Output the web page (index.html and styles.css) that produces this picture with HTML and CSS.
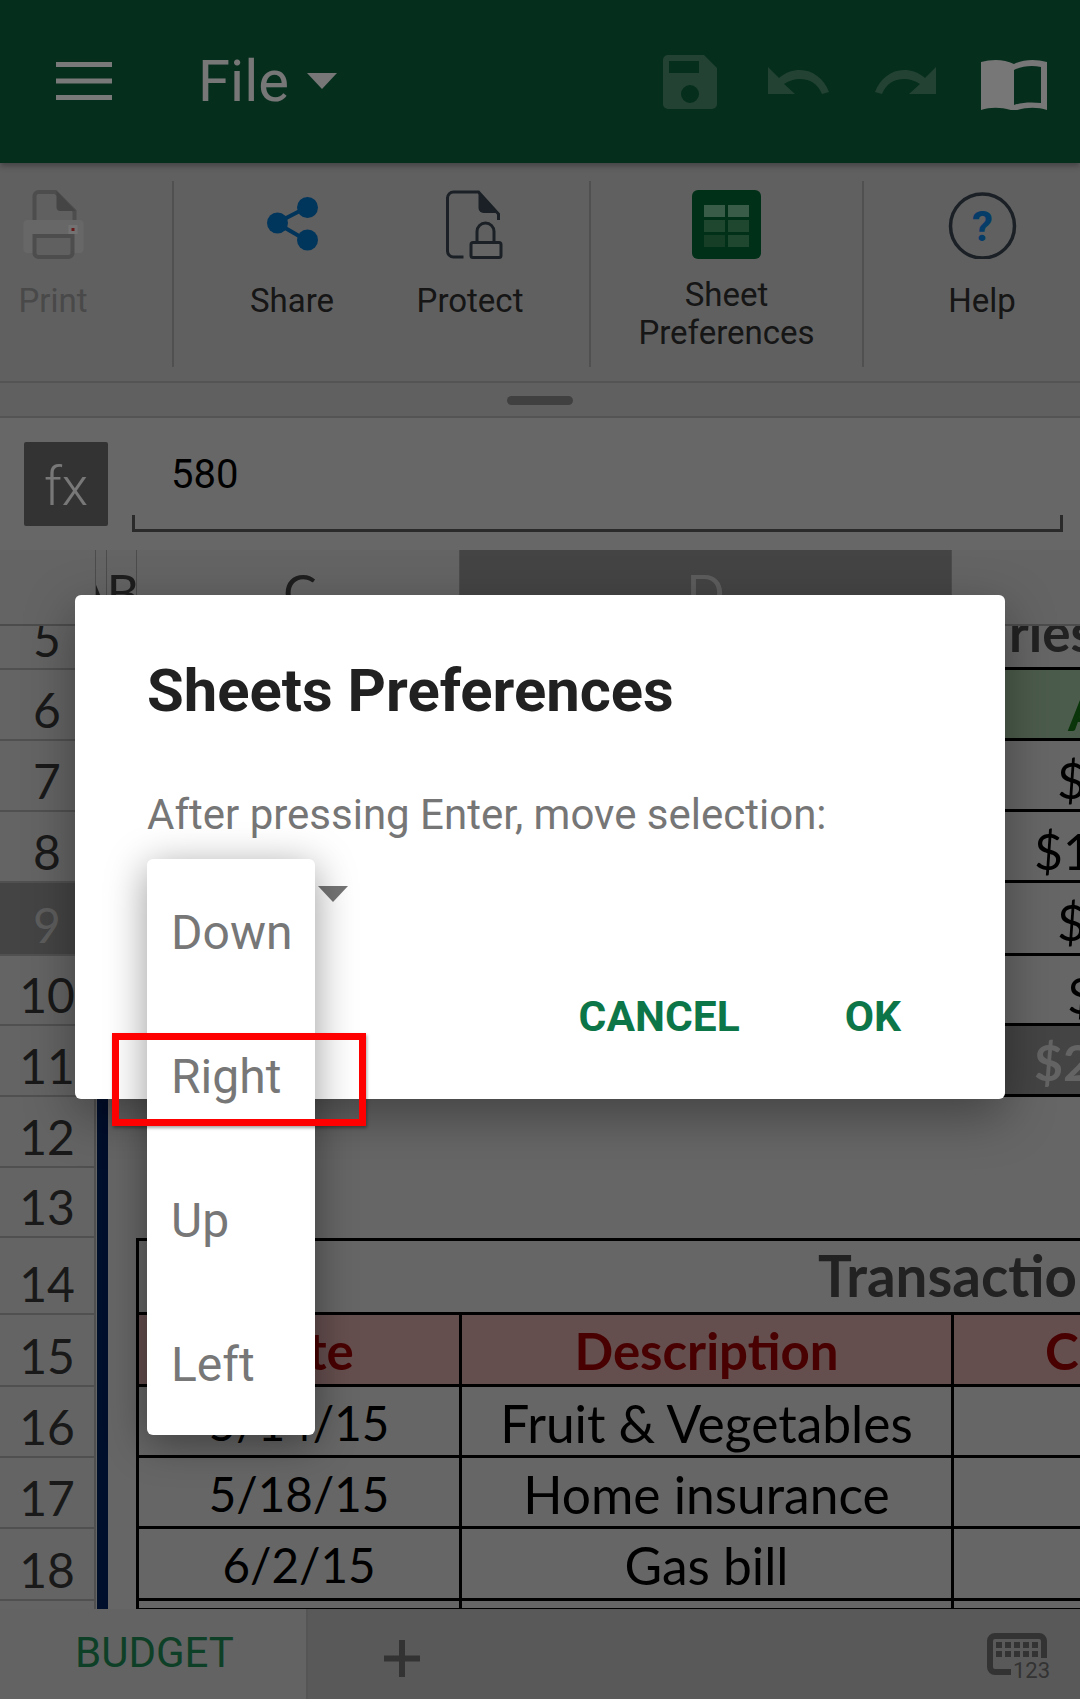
FILE: index.html
```html
<!DOCTYPE html>
<html lang="en">
<head>
<meta charset="utf-8">
<title>Sheets Preferences</title>
<link rel="stylesheet" href="styles.css">
</head>
<body>
<div class="app">
  <header class="appbar">
    <svg class="i-menu" viewBox="0 0 56 38"><path d="M0 0h56v5H0zM0 16.500h56v5H0zM0 33h56v5H0z"/></svg>
    <span class="file">File</span>
    <span class="file-caret"></span>
    <span class="appbar-space"></span>
    <svg class="i-save" viewBox="0 0 54 54"><path fill-rule="evenodd" d="M5 0h36l13 13v36a5 5 0 0 1-5 5H5a5 5 0 0 1-5-5V5a5 5 0 0 1 5-5zM6 6v12h30V6zM27 30a9 9 0 1 0 0 18 9 9 0 0 0 0-18z"/></svg>
    <svg class="i-undo" viewBox="0 0 61 27"><path d="M0 0l11 11C18 5 25 3 32 3c13 0 24 9 29 22l-7 2C50 17 42 12 32 12c-6 0-12 2-16 5l11 10H0z"/></svg>
    <svg class="i-redo" viewBox="0 0 61 27"><path d="M61 0L50 11C43 5 36 3 29 3 16 3 5 12 0 25l7 2c4-10 12-15 22-15 6 0 12 2 16 5L34 27h27z"/></svg>
    <svg class="i-book" viewBox="0 0 66 51"><path fill-rule="evenodd" d="M0 3c11-3 23-3 33 2 10-5 22-5 33-2v48c-10-3-21-3-33 1-12-4-23-4-33-1zM33 11v35c9-3 18-3 27-2V8c-9-2-19-1-27 3z"/></svg>
  </header>

  <section class="ribbon">
    <div class="rgroup rgroup-print">
      <div class="ritem ritem-off">
        <svg class="ricon" viewBox="0 0 60 69">
          <path class="p-line" d="M11 30V6a4 4 0 0 1 4-4h17l19 19v9" />
          <path class="p-fold" d="M33 1l19 20H37a4 4 0 0 1-4-4z"/>
          <path class="p-body" d="M4 30h52a4 4 0 0 1 4 4v25a4 4 0 0 1-4 4H4a4 4 0 0 1-4-4V34a4 4 0 0 1 4-4z"/>
          <path class="p-led" d="M45 35h9v9h-9z"/>
          <path class="p-dot" d="M48 38h3v3h-3z"/>
          <path class="p-tray" d="M11 46h38v17a4 4 0 0 1-4 4H15a4 4 0 0 1-4-4z"/>
        </svg>
        <span class="rlabel">Print</span>
      </div>
    </div>
    <div class="rgroup rgroup-doc">
      <div class="ritem">
        <svg class="ricon" viewBox="0 0 60 69">
          <path class="s-line" d="M14 33L47 16M14 33l33 19"/>
          <circle class="s-dot" cx="15" cy="33" r="10.500"/>
          <circle class="s-dot" cx="45" cy="17.500" r="10.500"/>
          <circle class="s-dot" cx="45" cy="50" r="10.500"/>
        </svg>
        <span class="rlabel">Share</span>
      </div>
      <div class="ritem">
        <svg class="ricon" viewBox="0 0 60 69">
          <path class="l-line" d="M23 67H13a6 6 0 0 1-6-6V8a6 6 0 0 1 6-6h25l20 22v6"/>
          <path class="l-fold" d="M38 1.500L58 23H43a5 5 0 0 1-5-5z"/>
          <path class="l-line" d="M36.500 52V41.500a8.500 8.500 0 0 1 17 0V52"/>
          <rect class="l-box" x="30.500" y="52.500" width="30" height="15" rx="2"/>
        </svg>
        <span class="rlabel">Protect</span>
      </div>
    </div>
    <div class="rgroup rgroup-sheet">
      <div class="ritem ritem-wide ritem-two">
        <svg class="ricon" viewBox="0 0 69 69">
          <rect class="g-bg" width="69" height="69" rx="6"/>
          <path class="g-a" d="M12 15h21v12H12zM36 15h21v12H36z"/>
          <path class="g-b" d="M12 30h21v12H12zM36 30h21v12H36z"/>
          <path class="g-c" d="M12 45h21v12H12z"/>
          <path class="g-b" d="M36 45h21v12H36z"/>
        </svg>
        <span class="rlabel">Sheet Preferences</span>
      </div>
    </div>
    <div class="rgroup rgroup-help">
      <div class="ritem">
        <svg class="ricon" viewBox="0 0 66 69">
          <circle class="h-ring" cx="33" cy="36" r="32"/>
          <text class="h-q" x="33" y="51">?</text>
        </svg>
        <span class="rlabel">Help</span>
      </div>
    </div>
  </section>
  <div class="handle-strip"><span class="handle"></span></div>

  <section class="formula">
    <div class="fx">fx</div>
    <div class="formula-field"><span class="formula-value">580</span></div>
  </section>

  <section class="sheet">
    <div class="colhead">
      <div class="ch ch-corner"></div>
      <div class="ch ch-b"><span>AB</span></div>
      <div class="ch ch-c">C</div>
      <div class="ch ch-d">D</div>
      <div class="ch ch-e"></div>
    </div>

    <div class="row h44"><div class="rn">5</div><div class="bar"></div><div class="gap"></div><div class="c-c"></div><div class="c-d"></div><div class="c-e e-line e-title"><span>ries</span></div></div>
    <div class="row"><div class="rn">6</div><div class="bar"></div><div class="gap"></div><div class="c-c"></div><div class="c-d"></div><div class="c-e e-line e-green"><span>A</span></div></div>
    <div class="row"><div class="rn">7</div><div class="bar"></div><div class="gap"></div><div class="c-c"></div><div class="c-d"></div><div class="c-e e-line e-far">$</div></div>
    <div class="row"><div class="rn">8</div><div class="bar"></div><div class="gap"></div><div class="c-c"></div><div class="c-d"></div><div class="c-e e-line e-near">$1</div></div>
    <div class="row h73"><div class="rn rn-on">9</div><div class="bar"></div><div class="gap"></div><div class="c-c"></div><div class="c-d"></div><div class="c-e e-line e-far">$</div></div>
    <div class="row h70"><div class="rn">10</div><div class="bar"></div><div class="gap"></div><div class="c-c"></div><div class="c-d"></div><div class="c-e e-line e-farther">$</div></div>
    <div class="row"><div class="rn">11</div><div class="bar"></div><div class="gap"></div><div class="c-c"></div><div class="c-d"></div><div class="c-e e-line e-total">$2</div></div>
    <div class="row"><div class="rn">12</div><div class="bar"></div><div class="gap"></div></div>
    <div class="row h70"><div class="rn">13</div><div class="bar"></div><div class="gap"></div></div>
    <div class="row h77"><div class="rn">14</div><div class="bar"></div><div class="gap"></div><div class="t-title"><span>Transactio</span></div></div>
    <div class="row h72"><div class="rn">15</div><div class="bar"></div><div class="gap"></div><div class="t t-c t-head">Date</div><div class="t t-d t-head">Description</div><div class="t t-e t-head t-ca">Ca</div></div>
    <div class="row"><div class="rn">16</div><div class="bar"></div><div class="gap"></div><div class="t t-c">5/14/15</div><div class="t t-d t-text">Fruit &amp; Vegetables</div><div class="t t-e"></div></div>
    <div class="row"><div class="rn">17</div><div class="bar"></div><div class="gap"></div><div class="t t-c">5/18/15</div><div class="t t-d t-text">Home insurance</div><div class="t t-e"></div></div>
    <div class="row h72"><div class="rn">18</div><div class="bar"></div><div class="gap"></div><div class="t t-c">6/2/15</div><div class="t t-d t-text">Gas bill</div><div class="t t-e"></div></div>
    <div class="row h10"><div class="rn"></div><div class="bar"></div><div class="gap"></div><div class="t t-c"></div><div class="t t-d"></div><div class="t t-e"></div></div>
  </section>

  <footer class="tabs">
    <div class="tab">BUDGET</div>
    <svg class="i-plus" viewBox="0 0 36 37"><path d="M15 0h6v15.500h15v6H21V37h-6V21.500H0v-6h15z"/></svg>
    <span class="appbar-space"></span>
    <svg class="i-kbd" viewBox="0 0 63 45">
      <path class="k-line" d="M24 39H8a5 5 0 0 1-5-5V8a5 5 0 0 1 5-5h44a5 5 0 0 1 5 5v17"/>
      <path class="k-keys" d="M9 9h6v6H9zM18 9h6v6h-6zM27 9h6v6h-6zM36 9h6v6h-6zM45 9h6v6h-6zM9 18h6v6H9zM18 18h6v6h-6zM27 18h6v6h-6zM36 18h6v6h-6zM45 18h6v6h-6z"/>
      <text class="k-num" x="26" y="45">123</text>
    </svg>
  </footer>
</div>

<div class="scrim"></div>

<div class="dialog">
  <h1 class="dialog-title">Sheets Preferences</h1>
  <p class="dialog-text">After pressing Enter, move selection:</p>
  <span class="select-caret"></span>
  <div class="dialog-actions">
    <span class="action action-cancel">CANCEL</span>
    <span class="action">OK</span>
  </div>
</div>

<ul class="menu">
  <li>Down</li>
  <li>Right</li>
  <li>Up</li>
  <li>Left</li>
</ul>

<div class="callout"></div>
</body>
</html>
```

FILE: styles.css
```css
* { box-sizing: border-box; }
html, body { margin: 0; padding: 0; }
body {
  width: 1080px;
  height: 1699px;
  overflow: hidden;
  position: relative;
  font-family: Roboto, sans-serif;
  background: #ccc;
}
.app { display: flex; flex-direction: column; height: 1699px; }

/* app bar */
.appbar {
  height: 163px;
  background: #0a5c3a;
  display: flex;
  align-items: flex-start;
  flex: none;
  box-shadow: 0 3px 6px rgba(0,0,0,.3);
  position: relative;
  padding-left: 56px;
}
.i-menu { width: 56px; height: 38px; margin-top: 62px; fill: #f2f2f2; flex: none; }
.file {
  margin-left: 86px;
  font-size: 58px;
  font-weight: 400;
  line-height: 68px;
  margin-top: 47px;
  color: #eee;
}
.file-caret {
  margin: 73px 0 0 18px;
  border-left: 15px solid transparent;
  border-right: 15px solid transparent;
  border-top: 16px solid #eee;
}
.appbar-space { flex: 1; }
.i-save { width: 54px; height: 54px; margin-top: 55px; fill: #468468; flex: none; }
.i-undo { width: 61px; height: 27px; margin: 67px 0 0 51px; fill: #468468; flex: none; }
.i-redo { width: 61px; height: 27px; margin: 67px 0 0 46px; fill: #468468; flex: none; }
.i-book { width: 66px; height: 51px; margin: 59px 33px 0 45px; fill: #eee; flex: none; }

/* ribbon */
.ribbon {
  height: 220px;
  flex: none;
  background: #c0c0c0;
  display: flex;
  border-bottom: 2px solid #a8a8a8;
  padding-top: 18px;
  overflow: hidden;
}
.rgroup { height: 186px; display: flex; flex: none; padding-top: 9px; border-right: 2px solid #a0a0a0; }
.rgroup-print { width: 174px; }
.rgroup-doc { width: 417px; padding-left: 58px; gap: 58px; }
.rgroup-sheet { width: 273px; justify-content: center; }
.rgroup-help { width: 216px; padding-left: 58px; border-right: 0; }
.ritem { width: 120px; display: flex; flex-direction: column; align-items: center; }
.ritem-off { width: 106px; }
.ritem-wide { width: 190px; }
.ricon { height: 69px; width: 69px; flex: none; }
.rlabel {
  font-size: 33px;
  line-height: 38px;
  color: #2c2c2c;
  margin-top: 23px;
  text-align: center;
}
.ritem-two .rlabel { margin-top: 17px; }
.ritem-off .rlabel { color: #929292; }

.p-line { fill: none; stroke: #9a9a9a; stroke-width: 4; }
.p-fold { fill: #8a8a8a; }
.p-body { fill: #cfcfcf; }
.p-led { fill: #e4e4e4; }
.p-dot { fill: #d03030; }
.p-tray { fill: #c0c0c0; stroke: #9a9a9a; stroke-width: 4; }
.s-line { stroke: #0068b4; stroke-width: 4; fill: none; }
.s-dot { fill: #006ab8; }
.l-line { fill: none; stroke: #34404a; stroke-width: 3; }
.l-fold { fill: #34404a; }
.l-box { fill: #cacaca; stroke: #34404a; stroke-width: 3; }
.g-bg { fill: #006030; }
.g-a { fill: #70b890; }
.g-b { fill: #3f8f60; }
.g-c { fill: #2c7a4c; }
.h-ring { fill: none; stroke: #34404a; stroke-width: 3.500; }
.h-q { font: 700 42px Roboto, sans-serif; fill: #0a78d0; text-anchor: middle; }

.handle-strip {
  height: 35px;
  flex: none;
  background: #c0c0c0;
  border-bottom: 2px solid #a8a8a8;
  display: flex;
  justify-content: center;
  padding-top: 13px;
}
.handle { width: 66px; height: 9px; border-radius: 5px; background: #808080; }

/* formula bar */
.formula {
  height: 132px;
  flex: none;
  background: #cecece;
  padding: 24px 17px 0 24px;
  display: flex;
  gap: 24px;
}
.fx {
  width: 84px;
  height: 84px;
  background: #666;
  border-radius: 2px;
  color: #f0f0f0;
  font-size: 54px;
  font-weight: 300;
  line-height: 90px;
  text-align: center;
}
.formula-field {
  flex: 1;
  height: 90px;
  position: relative;
  padding-left: 39px;
}
.formula-field::after {
  content: "";
  position: absolute;
  left: 0; right: 0; bottom: 0;
  height: 14px;
  border: 3px solid #555;
  border-top: 0;
}
.formula-value { font-size: 40px; line-height: 46px; color: #000; display: block; margin-top: 10px; }

/* sheet */
.sheet { flex: 1; min-height: 0; overflow: hidden; background: #ccc; font-family: Lato, sans-serif; }
.colhead { display: flex; height: 76px; border-bottom: 2px solid #999; background: #c8c8c8; }
.ch { color: #3c3c3c; font-size: 50px; line-height: 84px; text-align: center; height: 74px; overflow: hidden; flex: none; border-right: 1px solid #999; }
.ch-corner { width: 96px; border-right: 1px solid #999; }
.ch-b {
  width: 41px;
  display: flex;
  justify-content: flex-end;
  background: linear-gradient(#999, #999) no-repeat 10px 0 / 1px 100%;
}
.ch-b span { flex: none; margin-right: -3px; }
.ch-c { width: 323px; padding-left: 4px; }
.ch-d { width: 492px; background: #888; color: #bbb; }
.ch-e { flex: 1; border-right: 0; }

.row { display: flex; height: 71px; flex: none; color: #000; overflow: hidden; }
.h44 { height: 44px; }
.h73 { height: 73px; }
.h70 { height: 70px; }
.h72 { height: 72px; }
.h77 { height: 77px; }
.h10 { height: 10px; }
.rn {
  width: 96px;
  flex: none;
  background: #c8c8c8;
  border-bottom: 2px solid #a0a0a0;
  border-right: 2px solid #a0a0a0;
  color: #333;
  font-size: 48px;
  line-height: 45px;
  text-align: center;
  display: flex;
  align-items: flex-end;
  justify-content: center;
  padding-bottom: 7px;
}
.rn-on { background: #888; color: #bbb; }
.bar { width: 11px; flex: none; margin-left: 1px; background: #001f58; }
.gap { width: 28px; flex: none; }
.c-c { width: 324px; flex: none; }
.c-d { width: 492px; flex: none; }

.c-e { flex: 1; font-size: 50px; line-height: 78px; white-space: nowrap; overflow: hidden; }
.e-line { border-bottom: 3px solid #000; }
.e-title { font-size: 53px; font-weight: 700; color: #444; line-height: 46px; padding: 0 0 0 57px; }
.e-title span { display: block; margin-top: -17px; }
.e-green { background: #98b898; padding-left: 116px; color: #146a14; font-weight: 700; line-height: 84px; }
.e-far { padding-left: 105px; }
.e-near { padding-left: 82px; }
.e-farther { padding-left: 115px; }
.e-total { background: #888; color: #c8c8c8; font-weight: 700; padding-left: 82px; line-height: 72px; }

.t {
  flex: none;
  border-left: 3px solid #000;
  border-bottom: 3px solid #000;
  font-size: 47.500px;
  line-height: 72px;
  text-align: center;
  white-space: nowrap;
  overflow: hidden;
}
.t-c { width: 323px; }
.t-d { width: 492px; }
.t-text { font-size: 51.500px; }
.t-e { flex: 1; min-width: 0; text-align: left; }
.t-ca { padding-left: 91px; }
.t-head { background: #ca9c9c; color: #900000; font-weight: 700; font-size: 51px; }
.t-title {
  flex: 1;
  border: 3px solid #000;
  border-right: 0;
  overflow: hidden;
  white-space: nowrap;
  font-size: 56.500px;
  font-weight: 700;
  color: #444;
  line-height: 68px;
  padding-left: 679px;
}

/* tabs */
.tabs { height: 90px; flex: none; background: #b2b2b2; display: flex; align-items: flex-start; position: relative; }
.tab {
  width: 308px;
  height: 90px;
  background: #c6c6c6;
  border-right: 2px solid #aaa;
  color: #1c804f;
  font-size: 42px;
  line-height: 88px;
  padding-left: 75px;
}
.i-plus { width: 36px; height: 37px; margin: 31px 0 0 76px; fill: #666; flex: none; }
.i-kbd { width: 63px; height: 45px; margin: 24px 30px 0 0; flex: none; }
.k-line { fill: none; stroke: #666; stroke-width: 6; }
.k-keys { fill: #666; }
.k-num { font: 400 22px Roboto, sans-serif; fill: #666; }

/* modal */
.scrim { position: absolute; inset: 0; background: rgba(0,0,0,.5); }
.dialog {
  position: absolute;
  left: 75px;
  top: 595px;
  width: 930px;
  height: 504px;
  background: #fff;
  border-radius: 6px;
  box-shadow: 0 16px 50px rgba(0,0,0,.35);
  padding: 54px 73px 0;
}
.dialog-title {
  margin: 0;
  font-size: 59.750px;
  font-weight: 700;
  line-height: 84px;
  color: #212121;
  margin-left: -1px;
}
.dialog-text {
  margin: 57px 0 0;
  margin-left: -1px;
  font-size: 42px;
  line-height: 50px;
  color: #767676;
}
.select-caret {
  position: absolute;
  left: 243px;
  top: 291px;
  border-left: 15px solid transparent;
  border-right: 15px solid transparent;
  border-top: 16px solid #757575;
}
.dialog-actions {
  position: absolute;
  left: 0;
  right: 104px;
  top: 397px;
  display: flex;
  justify-content: flex-end;
  gap: 105px;
}
.action { font-size: 42.500px; font-weight: 700; line-height: 50px; color: #0c7649; }

.menu {
  position: absolute;
  left: 147px;
  top: 859px;
  width: 168px;
  margin: 0;
  padding: 0;
  list-style: none;
  background: #fff;
  border-radius: 6px;
  box-shadow: 0 8px 40px rgba(0,0,0,.4);
}
.menu li {
  height: 144px;
  line-height: 148px;
  padding-left: 24px;
  font-size: 48px;
  color: #777;
}
.callout {
  position: absolute;
  left: 112px;
  top: 1033px;
  width: 254px;
  height: 93px;
  border: 7px solid #f00;
  box-shadow: 1px 2px 3px rgba(0,0,0,.35);
}
```
